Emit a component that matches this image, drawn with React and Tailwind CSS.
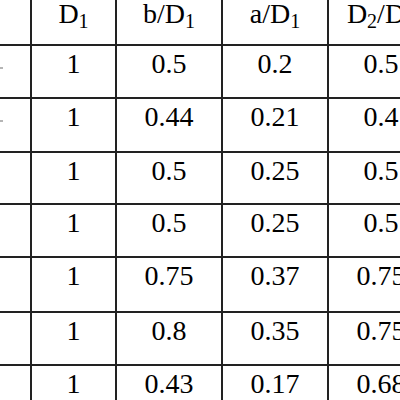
import React from "react";

const rows = [
  { h: "h-[53px]", mark: true, v: ["1", "0.5", "0.2", "0.5"] },
  { h: "h-[54px]", mark: true, v: ["1", "0.44", "0.21", "0.4"] },
  { h: "h-[52px]", mark: false, v: ["1", "0.5", "0.25", "0.5"] },
  { h: "h-[53px]", mark: false, v: ["1", "0.5", "0.25", "0.5"] },
  { h: "h-[55px]", mark: false, v: ["1", "0.75", "0.37", "0.75"] },
  { h: "h-[53px]", mark: false, v: ["1", "0.8", "0.35", "0.75"] },
  { h: "h-[60px]", mark: false, v: ["1", "0.43", "0.17", "0.68"] },
];

const cols = "grid grid-cols-[32px_85px_106px_106px_106px]";
const cell = "border-r-2 border-[#222] flex justify-center whitespace-nowrap";

function Sub({ children }) {
  return <sub className="text-[20px]">{children}</sub>;
}

export default function App() {
  return (
    <div
      className="w-[400px] h-[400px] overflow-hidden bg-white text-black"
      style={{ fontFamily: '"Liberation Serif", "Times New Roman", serif' }}
    >
      <div className="w-[437px] text-[28px]">
        <div className={`${cols} h-[46px] border-b-2 border-[#222] leading-[28px]`}>
          <div className={cell}></div>
          <div className={cell}>
            <span>
              D<Sub>1</Sub>
            </span>
          </div>
          <div className={cell}>
            <span>
              b/D<Sub>1</Sub>
            </span>
          </div>
          <div className={cell}>
            <span>
              a/D<Sub>1</Sub>
            </span>
          </div>
          <div className={cell}>
            <span>
              D<Sub>2</Sub>/D<Sub>1</Sub>
            </span>
          </div>
        </div>
        {rows.map((r, i) => (
          <div
            key={i}
            className={`${cols} ${r.h} border-b-2 border-[#222] leading-[28px]`}
          >
            <div className="border-r-2 border-[#222] flex justify-start pt-[21px]">
              {r.mark && (
                <span className="block w-[3px] h-[2px] bg-[#b5b5b5]"></span>
              )}
            </div>
            {r.v.map((t, j) => (
              <div key={j} className={`${cell} pt-[4px]`}>
                {t}
              </div>
            ))}
          </div>
        ))}
      </div>
    </div>
  );
}
